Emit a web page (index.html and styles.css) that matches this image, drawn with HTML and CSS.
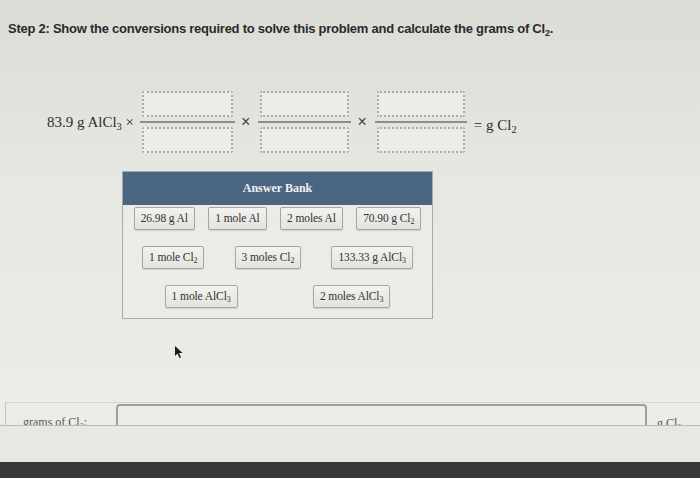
FILE: index.html
```html
<!DOCTYPE html>
<html>
<head>
<meta charset="utf-8">
<link rel="stylesheet" href="styles.css">
</head>
<body>
<div class="screen">
  <div class="main">
    <h1 class="title">Step 2: Show the conversions required to solve this problem and calculate the grams of Cl<sub>2</sub>.</h1>
    <div class="equation">
      <span class="given">83.9 g AlCl<sub>3</sub> ×</span>
      <div class="frac f1"><div class="slot"></div><div class="bar"></div><div class="slot"></div></div>
      <span class="times">×</span>
      <div class="frac f2"><div class="slot"></div><div class="bar"></div><div class="slot"></div></div>
      <span class="times">×</span>
      <div class="frac f3"><div class="slot"></div><div class="bar"></div><div class="slot"></div></div>
      <span class="result">= g Cl<sub>2</sub></span>
    </div>
    <div class="bank">
      <div class="bank-head">Answer Bank</div>
      <div class="bank-body">
        <div class="row r1">
          <span class="chip">26.98 g Al</span>
          <span class="chip">1 mole Al</span>
          <span class="chip">2 moles Al</span>
          <span class="chip">70.90 g Cl<sub>2</sub></span>
        </div>
        <div class="row r2">
          <span class="chip">1 mole Cl<sub>2</sub></span>
          <span class="chip">3 moles Cl<sub>2</sub></span>
          <span class="chip">133.33 g AlCl<sub>3</sub></span>
        </div>
        <div class="row r3">
          <span class="chip">1 mole AlCl<sub>3</sub></span>
          <span class="chip">2 moles AlCl<sub>3</sub></span>
        </div>
      </div>
    </div>
    <div class="cursor-wrap">
      <svg class="cursor" width="10" height="14" viewBox="0 0 10 14"><path d="M1 1 L1 11 L3.5 8.5 L5.5 13 L7 12.3 L5 8 L8.5 8 Z" fill="#1a1a1a"/></svg>
    </div>
    <div class="answer-card">
      <span class="answer-label">grams of Cl<sub>2</sub>:</span>
      <div class="answer-input"></div>
      <span class="answer-unit">g Cl<sub>2</sub></span>
    </div>
  </div>
  <div class="strip"></div>
  <div class="taskbar"></div>
</div>
</body>
</html>
```
FILE: styles.css
```css
* { box-sizing: border-box; }
html, body { margin: 0; padding: 0; }
body { width: 700px; height: 478px; overflow: hidden; background: #e5e5e1; }
.screen { width: 700px; height: 478px; display: flex; flex-direction: column; }
.main {
  height: 426px; overflow: hidden; position: relative;
  background: linear-gradient(180deg, #dcdcd6 0%, #e6e6e2 40%, #ecece9 100%);
  border-bottom: 1px solid #b9b9b5;
}
.title {
  margin: 0; padding: 21px 0 0 8px;
  font-family: "Liberation Sans", Arial, sans-serif;
  font-size: 13px; font-weight: bold; color: #2a2a2a; letter-spacing: -0.25px;
}
.title sub, .equation sub, .chip sub, .answer-card sub { font-size: 0.7em; vertical-align: -0.3em; line-height: 0; }
.equation {
  display: flex; align-items: center;
  margin-top: 55px; padding-left: 47px;
  font-family: "Liberation Serif", "Times New Roman", serif;
  font-size: 15px; color: #2e2e2e;
}
.given { margin-right: 6px; }
.frac { display: flex; flex-direction: column; align-items: center; width: 95px; }
.frac.f2 { width: 93px; }
.frac.f3 { width: 92px; }
.slot {
  width: calc(100% - 4px); height: 26px;
  border: 2px dotted #a9a9a6; background: #ecece9; border-radius: 2px;
}
.bar { width: 100%; height: 2px; background: #8d8d8a; margin: 4px 0; }
.times { font-family: "Liberation Sans", Arial, sans-serif; font-size: 16px; color: #444; margin: 0 8px 0 6px; }
.result { margin-left: 7px; margin-top: 6px; }
.bank {
  margin: 18px 0 0 122px; width: 311px; height: 148px;
  border: 1px solid #a8a8a4; background: #ebebe8;
}
.bank-head {
  height: 33px; background: #4b6682; color: #f2f2f2;
  display: flex; align-items: center; justify-content: center;
  font-family: "Liberation Serif", "Times New Roman", serif; font-size: 12px; font-weight: bold;
}
.bank-body { padding: 2px 4px 0; display: flex; flex-direction: column; gap: 16px; }
.row { display: flex; justify-content: space-around; align-items: center; }
.chip {
  display: inline-block; height: 23px; line-height: 21px; padding: 0 6px;
  border: 1px solid #a6a6a2; border-radius: 2px;
  background: linear-gradient(180deg, #f2f2ef 0%, #e2e2de 100%);
  box-shadow: 0 1px 1px rgba(0,0,0,0.12);
  font-family: "Liberation Serif", "Times New Roman", serif; font-size: 11.5px; color: #333;
  letter-spacing: -0.1px; white-space: nowrap;
}
.cursor-wrap { height: 46px; padding: 26px 0 0 174px; }
.cursor { display: block; }
.answer-card {
  margin: 37px 0 0 5px; width: 700px; height: 40px;
  border-left: 1px solid #c3c3bf; border-top: 1px solid #d4d4d0;
  display: flex; align-items: flex-start; position: relative;
}
.answer-label {
  font-family: "Liberation Serif", "Times New Roman", serif; font-size: 12px; color: #555;
  margin: 12px 0 0 17px; width: 93px;
}
.answer-input {
  margin-top: 1px; width: 531px; height: 40px;
  border: 2px solid #9f9f9b; border-radius: 4px; background: #ecece9;
}
.answer-unit {
  font-family: "Liberation Serif", "Times New Roman", serif; font-size: 12px; color: #555;
  margin: 13px 0 0 10px;
}
.strip { height: 36px; background: #e7e7e4; }
.taskbar { flex: 1; background: #383838; }
```
